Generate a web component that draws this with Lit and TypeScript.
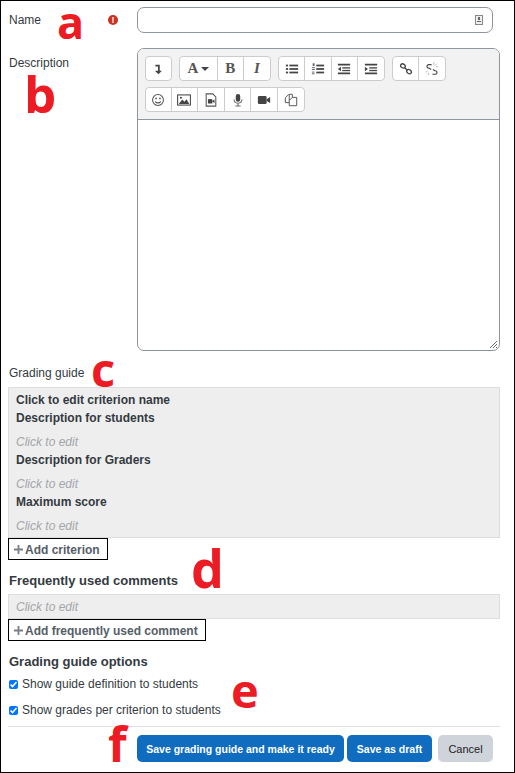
import { LitElement, html, css, svg } from "lit";
import { customElement } from "lit/decorators.js";

const ic = (body: unknown, vb = "0 0 16 16") =>
  html`<svg class="ic" viewBox="${vb}" width="14" height="14" aria-hidden="true">${body}</svg>`;

const lines = (x: number) => svg`<g fill="#444"><rect x="${x}" y="3" width="${15 - x}" height="2"/><rect x="${x}" y="7" width="${15 - x}" height="2"/><rect x="${x}" y="11" width="${15 - x}" height="2"/></g>`;

const I = {
  collapse: ic(svg`<path d="M5 3h5v7h2.5L8.5 14 4.5 10H8V5H5z" fill="#444"/>`),
  bullets: ic(svg`${lines(5)}<g fill="#444"><rect x="1" y="3" width="2.5" height="2"/><rect x="1" y="7" width="2.5" height="2"/><rect x="1" y="11" width="2.5" height="2"/></g>`),
  numbers: ic(svg`${lines(6)}<g fill="#556"><rect x="2" y="1.500" width="2" height="3"/><rect x="1" y="6" width="3.500" height="1"/><rect x="1" y="8" width="3.500" height="1"/><rect x="1" y="11" width="3" height="1"/><rect x="1" y="13" width="3" height="1"/></g>`),
  outdent: ic(svg`<g fill="#444"><rect x="1" y="2" width="14" height="2"/><rect x="6" y="6" width="9" height="1.5"/><rect x="6" y="9" width="9" height="1.5"/><rect x="1" y="12" width="14" height="2"/><path d="M4.5 5.5v5L1 8z"/></g>`),
  indent: ic(svg`<g fill="#444"><rect x="1" y="2" width="14" height="2"/><rect x="6" y="6" width="9" height="1.5"/><rect x="6" y="9" width="9" height="1.5"/><rect x="1" y="12" width="14" height="2"/><path d="M1 5.5v5L4.5 8z"/></g>`),
  link: ic(svg`<g fill="none" stroke="#444" stroke-width="1.500"><ellipse cx="4.500" cy="4.500" rx="2.800" ry="2.200" transform="rotate(35 4.500 4.500)"/><ellipse cx="11.500" cy="11" rx="2.800" ry="2.200" transform="rotate(35 11.500 11)"/><path d="M6.500 6.500l3 3"/></g>`),
  unlink: ic(svg`<g fill="none" stroke="#444" stroke-width="1.300"><path d="M7.500 3H4.500C1.500 3 1.500 7 4.500 7L7 8.500"/><path d="M8.500 14H11.500C14.500 14 14.500 10 11.500 10L9 8.500"/></g><g stroke="#aaa" stroke-width="1"><path d="M10 .500v2.500M13.500 2l-2 2M15 5.500h-2.500M1 11.500l2-1M3.500 15l1-2.500"/></g>`),
  smile: ic(svg`<g fill="none" stroke="#555" stroke-width="1.200"><circle cx="8" cy="8" r="6.200"/><path d="M4.800 9.800c1.500 2 4.900 2 6.400 0"/></g><circle cx="5.800" cy="6.200" r="1" fill="#555"/><circle cx="10.200" cy="6.200" r="1" fill="#555"/>`),
  image: ic(svg`<rect x=".7" y="2.200" width="14.600" height="11.600" fill="none" stroke="#444" stroke-width="1.200"/><path d="M2 12.500l4-5 2.500 2.500 2.500-3 3 5.500z" fill="#444"/><circle cx="4.500" cy="5.500" r="1.200" fill="#444"/>`),
  media: ic(svg`<path d="M2.500 1h7.500l3.500 3.500V15h-11z" fill="none" stroke="#555" stroke-width="1.200"/><rect x="4.500" y="7" width="5" height="5" fill="#444"/><path d="M9.500 9l2.500-1.500v4L9.500 10z" fill="#444"/>`),
  mic: ic(svg`<rect x="5.500" y="1" width="5" height="9" rx="2.500" fill="#444"/><path d="M3.500 7.500c0 5.500 9 5.500 9 0M8 12v2.500M5 14.800h6" fill="none" stroke="#666" stroke-width="1.200"/>`),
  video: ic(svg`<rect x="1" y="3.500" width="10" height="9" rx="1.500" fill="#444"/><path d="M11 7l4-2.500v7L11 9z" fill="#444"/>`),
  copy: ic(svg`<g fill="none" stroke="#555" stroke-width="1.100"><path d="M6 8.500V1.500H9.500V5M5.500 1.500L1.500 5.500V11H6"/><path d="M9.500 5L6 8.500V14.500H14.500V5z"/></g>`),
};

@customElement("app-root")
export class AppRoot extends LitElement {
  static styles = css`
    :host {
      display: block;
      position: relative;
      box-sizing: border-box;
      width: 515px;
      height: 773px;
      border: 1px solid #000;
      padding: 6px 14px 0 7px;
      background: #fff;
      font-family: "Liberation Sans", Arial, sans-serif;
      font-size: 12px;
      color: #343a40;
      overflow: hidden;
    }
    .row { display: flex; }
    .label { width: 129px; flex: none; color: #343a40; position: relative; }
    .name-row { height: 26px; }
    .name-row .label { line-height: 26px; padding-left: 1px; box-sizing: border-box; }
    .req {
      position: absolute; left: 100px; top: 8px;
      width: 10px; height: 10px; border-radius: 50%;
      background: #ca3120; color: #fff;
      font: bold 9px/10px "Liberation Sans", sans-serif; text-align: center;
    }
    .input {
      width: 356px; height: 26px; box-sizing: border-box;
      border: 1px solid #8f959e; border-radius: 7px;
      display: flex; align-items: center; justify-content: flex-end; padding-right: 9px;
    }
    .lock { width: 8px; height: 10px; display: block; }
    .desc-row { margin-top: 15px; height: 303px; }
    .desc-row .label { padding: 8px 0 0 1px; box-sizing: border-box; line-height: 14px; }
    .editor {
      width: 363px; height: 303px; box-sizing: border-box;
      border: 1px solid #8f959e; border-radius: 7px; overflow: hidden;
      display: flex; flex-direction: column; position: relative;
    }
    .toolbar {
      height: 71px; flex: none; box-sizing: border-box;
      background: #f2f2f2; border-bottom: 1px solid #8f959e;
      padding: 7px 7px 0;
    }
    .tb-row { display: flex; gap: 7.6px; height: 25px; margin-bottom: 6px; }
    .group {
      display: flex; background: #fff; border: 1px solid #ccc; border-radius: 4px; height: 25px; box-sizing: border-box;
    }
    .btn {
      width: 25.6px; height: 23px; box-sizing: content-box; display: flex; align-items: center; justify-content: center;
      border-left: 1px solid #ccc; color: #444;
    }
    .btn:first-child { border-left: 0; width: 24.6px; }
    .btn.wide { width: 36.4px; gap: 3px; }
    .caret { width: 0; height: 0; border: 4px solid transparent; border-top: 4px solid #444; border-bottom: 0; }
    .serif { font: bold 15px "Liberation Serif", serif; color: #555; }
    .serif.i { font-style: italic; }
    .grip { position: absolute; right: 2px; bottom: 2px; width: 7px; height: 7px; }
    .ic { display: block; }
    .plain-label { margin-top: 15px; padding-left: 1px; line-height: 14px; }
    .guide {
      margin-top: 7px; height: 151px; box-sizing: border-box;
      background: #eee; border: 1px solid #ddd; padding: 3px 7px 0;
      width: 492px;
    }
    .g-line { font-weight: bold; line-height: 18px; color: #343a40; }
    .g-edit { font-style: italic; color: #a3a6aa; line-height: 18px; margin: 6px 0 0; }
    .add {
      display: inline-flex; align-items: center; box-sizing: border-box;
      height: 22px; border: 1px solid #000; padding: 1px 7px 0 5px; vertical-align: top;
      font-weight: bold; color: #555e67;
    }
    .plus { width: 9px; height: 9px; margin-right: 2px; display: block; }
    .add-wrap { height: 22px; display: flex; }
    h3 { margin: 0; font-size: 13px; line-height: 16px; font-weight: bold; color: #343a40; padding-left: 1px; }
    .h-freq { margin-top: 13px; }
    .freq {
      margin-top: 5px; height: 25px; box-sizing: border-box; width: 492px;
      background: #eee; border: 1px solid #ddd; padding: 1px 7px 0;
      font-style: italic; color: #a3a6aa; line-height: 23px;
    }
    .h-opt { margin-top: 13px; }
    .check { display: flex; align-items: center; height: 14px; gap: 4px; color: #343a40; }
    .check.one { margin-top: 7px; }
    .check.two { margin-top: 12px; }
    .box {
      width: 9px; height: 9px; border-radius: 2px; background: #0075ff; flex: none; margin-left: 1px;
      display: flex; align-items: center; justify-content: center;
    }
    .box svg { width: 9px; height: 9px; display: block; }
    hr { margin: 9px 0 0; width: 492px; border: 0; border-top: 1px solid #dee2e6; }
    .actions { display: flex; margin-top: 8px; padding-left: 129px; height: 27px; }
    .a-btn {
      height: 27px; border-radius: 5px; display: flex; align-items: center; justify-content: center;
      font-weight: bold; color: #fff; background: #0f6cbf; box-sizing: border-box; font-size: 10.5px;
    }
    .a-1 { width: 207px; }
    .a-2 { width: 85px; margin-left: 3px; }
    .a-3 { width: 55px; margin-left: 6px; background: #ced4da; color: #1d2125; font-weight: normal; font-size: 11px; }
    .mark {
      position: absolute; display: block; color: #ed1c24;
      font-family: "Open Sans", "Liberation Sans", sans-serif; font-weight: 700; line-height: .9;
      pointer-events: none;
    }
    .m-a { left: 56px; top: 1px; font-size: 45px; }
    .m-b { left: 23px; top: 70px; font-size: 51px; }
    .m-c { left: 90px; top: 347px; font-size: 47px; }
    .m-d { left: 190px; top: 544px; font-size: 52px; }
    .m-e { left: 230px; top: 668px; font-size: 47px; }
    .m-f { left: 107px; top: 721px; font-size: 48px; }
  `;

  private btns(items: unknown[]) {
    return html`<div class="group">${items.map((i) => html`<div class="btn">${i}</div>`)}</div>`;
  }

  private add(text: string) {
    return html`<div class="add-wrap"><div class="add">
      <svg class="plus" viewBox="0 0 10 10"><path d="M4 0h2v4h4v2H6v4H4V6H0V4h4z" fill="#7b8085"/></svg>${text}
    </div></div>`;
  }

  render() {
    return html`
      <div class="row name-row">
        <div class="label">Name<span class="req">!</span></div>
        <div class="input">
          <svg class="lock" viewBox="0 0 8 10"><rect x=".5" y=".5" width="7" height="9" fill="#eee" stroke="#888"/><rect x="3" y="2" width="2" height="3" fill="#666"/><rect x="2" y="6" width="4" height="1" fill="#666"/></svg>
        </div>
      </div>
      <div class="row desc-row">
        <div class="label">Description</div>
        <div class="editor">
          <div class="toolbar">
            <div class="tb-row">
              ${this.btns([I.collapse])}
              <div class="group">
                <div class="btn wide"><span class="serif">A</span><span class="caret"></span></div>
                <div class="btn"><span class="serif">B</span></div>
                <div class="btn"><span class="serif i">I</span></div>
              </div>
              ${this.btns([I.bullets, I.numbers, I.outdent, I.indent])}
              ${this.btns([I.link, I.unlink])}
            </div>
            <div class="tb-row">
              ${this.btns([I.smile, I.image, I.media, I.mic, I.video, I.copy])}
            </div>
          </div>
          <svg class="grip" viewBox="0 0 7 7"><path d="M0 7l7-7M3 7l4-4M6 7l1-1" stroke="#666" fill="none"/></svg>
        </div>
      </div>
      <div class="plain-label">Grading guide</div>
      <div class="guide">
        <div class="g-line">Click to edit criterion name</div>
        <div class="g-line">Description for students</div>
        <div class="g-edit">Click to edit</div>
        <div class="g-line">Description for Graders</div>
        <div class="g-edit">Click to edit</div>
        <div class="g-line">Maximum score</div>
        <div class="g-edit">Click to edit</div>
      </div>
      ${this.add("Add criterion")}
      <h3 class="h-freq">Frequently used comments</h3>
      <div class="freq">Click to edit</div>
      ${this.add("Add frequently used comment")}
      <h3 class="h-opt">Grading guide options</h3>
      <div class="check one"><span class="box"><svg viewBox="0 0 9 9"><path d="M1.500 4.500l2 2 4-4.500" fill="none" stroke="#fff" stroke-width="1.600"/></svg></span>Show guide definition to students</div>
      <div class="check two"><span class="box"><svg viewBox="0 0 9 9"><path d="M1.500 4.500l2 2 4-4.500" fill="none" stroke="#fff" stroke-width="1.600"/></svg></span>Show grades per criterion to students</div>
      <hr />
      <div class="actions">
        <div class="a-btn a-1">Save grading guide and make it ready</div>
        <div class="a-btn a-2">Save as draft</div>
        <div class="a-btn a-3">Cancel</div>
      </div>
      <span class="mark m-a">a</span>
      <span class="mark m-b">b</span>
      <span class="mark m-c">c</span>
      <span class="mark m-d">d</span>
      <span class="mark m-e">e</span>
      <span class="mark m-f">f</span>
    `;
  }
}
